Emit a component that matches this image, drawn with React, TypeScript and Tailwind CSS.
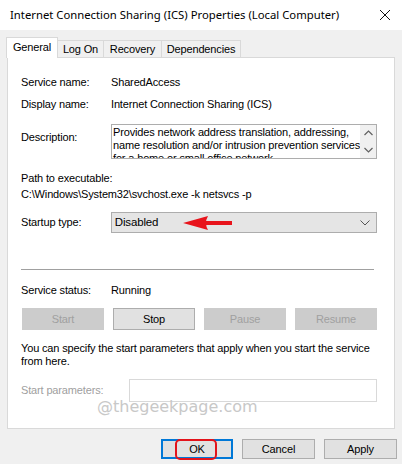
import React from 'react';

const tabs = [
  { label: 'General', w: 'w-[52px]', active: true },
  { label: 'Log On', w: 'w-[46px]', active: false },
  { label: 'Recovery', w: 'w-[58px]', active: false },
  { label: 'Dependencies', w: 'w-[79px]', active: false },
];

function ControlButton({ label, disabled }: { label: string; disabled?: boolean }) {
  return (
    <div
      className={`w-[82px] h-[22px] flex items-center justify-center border ${
        disabled ? 'bg-[#cccccc] border-[#cccccc] text-[#a0a0a0]' : 'bg-[#e1e1e1] border-[#adadad] text-black'
      }`}
    >
      {label}
    </div>
  );
}

export default function App() {
  return (
    <div
      className="w-[402px] h-[464px] bg-[#f0f0f0] flex flex-col text-[11px] tracking-[-0.15px] text-black overflow-hidden"
      style={{ fontFamily: '"Liberation Sans", Arial, sans-serif' }}
    >
      {/* title bar */}
      <div className="h-[30px] bg-white flex items-center justify-between pl-[10px] pr-[9px] shrink-0">
        <span
          className="text-[11.3px] tracking-normal whitespace-nowrap"
          style={{ fontFamily: '"Noto Sans", "Open Sans", sans-serif' }}
        >
          Internet Connection Sharing (ICS) Properties (Local Computer)
        </span>
        <svg width="12" height="12" viewBox="0 0 12 12" className="mr-[2px]">
          <path d="M1 1 L11 11 M11 1 L1 11" stroke="#111" strokeWidth="1" />
        </svg>
      </div>

      <div className="pl-[7px] pr-[7px] pt-[7px]">
        {/* tabs */}
        <div className="flex items-end h-[21px] -mb-px relative z-10 -ml-px">
          {tabs.map((t) =>
            t.active ? (
              <div
                key={t.label}
                className={`${t.w} h-[21px] bg-white border border-b-0 border-[#d9d9d9] flex items-center justify-center pb-[1px]`}
              >
                {t.label}
              </div>
            ) : (
              <div
                key={t.label}
                className={`${t.w} h-[18px] bg-[#f0f0f0] border border-l-0 border-[#d9d9d9] flex items-center justify-center`}
              >
                {t.label}
              </div>
            )
          )}
        </div>

        {/* panel */}
        <div className="relative h-[372px] bg-white border border-[#d9d9d9] pl-[13px] pr-[17px] pt-[13px] flex flex-col">
          <div className="flex items-center h-[22px]">
            <span className="w-[90px]">Service name:</span>
            <span>SharedAccess</span>
          </div>
          <div className="flex items-center h-[22px]">
            <span className="w-[90px]">Display name:</span>
            <span>Internet Connection Sharing (ICS)</span>
          </div>

          <div className="flex items-start mt-[9px]">
            <span className="w-[90px] pt-[5px]">Description:</span>
            <div className="w-[266px] h-[35px] border border-[#adadad] flex overflow-hidden">
              <div className="flex-1 pl-[1px] leading-[13px] pt-[1px] whitespace-nowrap overflow-hidden">
                <div>Provides network address translation, addressing,</div>
                <div>name resolution and/or intrusion prevention services</div>
                <div>for a home or small office network.</div>
              </div>
              <div className="w-[16px] bg-[#f0f0f0] flex flex-col items-center justify-between py-[5px]">
                <svg width="9" height="6" viewBox="0 0 9 6">
                  <path d="M0.5 5 L4.5 1 L8.5 5" fill="none" stroke="#606060" strokeWidth="1.2" />
                </svg>
                <svg width="9" height="6" viewBox="0 0 9 6">
                  <path d="M0.5 1 L4.5 5 L8.5 1" fill="none" stroke="#606060" strokeWidth="1.2" />
                </svg>
              </div>
            </div>
          </div>

          <div className="mt-[11px] leading-[16px]">
            <div>Path to executable:</div>
            <div>C:\Windows\System32\svchost.exe -k netsvcs -p</div>
          </div>

          <div className="flex items-center mt-[10px]">
            <span className="w-[90px]">Startup type:</span>
            <div className="relative w-[267px] h-[21px] bg-[#e5e5e5] border border-[#adadad] flex items-center justify-between pl-[3px] pr-[6px] text-[11.5px]">
              <span>Disabled</span>
              <svg width="10" height="6" viewBox="0 0 10 6">
                <path d="M0.5 0.5 L5 5 L9.5 0.5" fill="none" stroke="#555" strokeWidth="1" />
              </svg>
              {/* annotation arrow */}
              <svg width="52" height="16" viewBox="0 0 52 16" className="absolute left-[71px] top-[2px]">
                <path d="M0 8 L25 1 Q21 8 25 15 Z" fill="#e8141c" />
                <rect x="20" y="6" width="29" height="4" fill="#e8141c" />
              </svg>
            </div>
          </div>

          <div className="mt-[36px] h-px bg-[#a0a0a0] w-[353px]" />

          <div className="flex items-center h-[16px] mt-[12px]">
            <span className="w-[90px]">Service status:</span>
            <span>Running</span>
          </div>

          <div className="flex gap-[9px] mt-[10px] ml-[1px]">
            <ControlButton label="Start" disabled />
            <ControlButton label="Stop" />
            <ControlButton label="Pause" disabled />
            <ControlButton label="Resume" disabled />
          </div>

          <div className="mt-[12px] leading-[13px] whitespace-nowrap">
            <div>You can specify the start parameters that apply when you start the service</div>
            <div>from here.</div>
          </div>

          <div className="flex items-center mt-[11px]">
            <span className="w-[108px] text-[#a0a0a0]">Start parameters:</span>
            <div className="w-[248px] h-[23px] bg-white border border-[#d9d9d9]" />
          </div>

          {/* watermark */}
          <div
            className="absolute left-[89px] top-[337px] text-[16px] tracking-normal text-[#c8c8c8] whitespace-nowrap"
            style={{ fontFamily: '"DejaVu Sans", sans-serif' }}
          >
            @thegeekpage.com
          </div>
        </div>
      </div>

      {/* dialog buttons */}
      <div className="flex justify-end gap-[9px] pr-[5px] mt-[10px]">
        <div className="relative w-[72px] h-[20px] bg-[#e1e1e1] border-2 border-[#0078d7] flex items-center justify-center">
          OK
          <div className="absolute left-[12px] -top-[2px] w-[42px] h-[21px] border-2 border-[#e3131b] rounded-[5px]" />
        </div>
        <div className="w-[73px] h-[20px] bg-[#e1e1e1] border border-[#adadad] flex items-center justify-center">Cancel</div>
        <div className="w-[73px] h-[20px] bg-[#e1e1e1] border border-[#adadad] flex items-center justify-center">Apply</div>
      </div>
    </div>
  );
}
